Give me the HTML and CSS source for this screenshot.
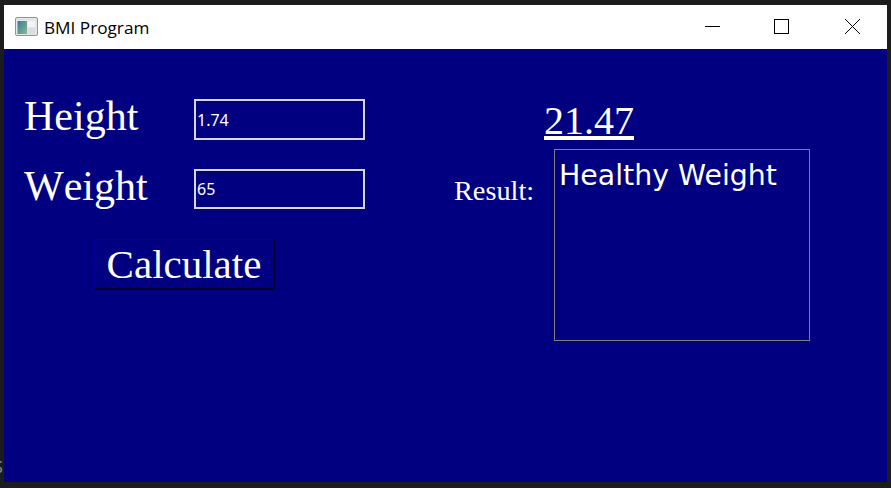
FILE: index.html
```html
<!DOCTYPE html>
<html lang="en">
<head>
  <meta charset="UTF-8">
  <title>BMI Program</title>
  <link rel="stylesheet" href="styles.css">
</head>

<body>
  <span class="behind">S</span>
  <div class="window">
    <div class="titlebar">
      <svg class="app-icon" width="23" height="19" viewBox="0 0 23 19">
        <defs>
          <linearGradient id="pane" x1="0" y1="0" x2="1" y2="1">
            <stop offset="0" stop-color="#3a7a98"/>
            <stop offset="1" stop-color="#86bb8c"/>
          </linearGradient>
        </defs>
        <rect x="0.5" y="0.5" width="22" height="18" rx="1.5" fill="#e4e6e6" stroke="#8f9496"/>
        <rect x="2.5" y="4" width="9.5" height="13" fill="url(#pane)"/>
        <rect x="12.5" y="4" width="7.5" height="6" fill="#f2f3f3"/>
        <rect x="12.5" y="11" width="7.5" height="6" fill="#dadede"/>
      </svg>
      <span class="title">BMI Program</span>
      <div class="controls">
        <div class="control">
          <svg width="15" height="15" viewBox="0 0 15 15"><path d="M0 7.5H15" stroke="#000" fill="none"/></svg>
        </div>
        <div class="control control-max">
          <svg width="15" height="15" viewBox="0 0 15 15"><rect x="0.5" y="0.5" width="14" height="14" stroke="#000" fill="none"/></svg>
        </div>
        <div class="control control-close">
          <svg width="15" height="15" viewBox="0 0 15 15"><path d="M0 0L15 15M15 0L0 15" stroke="#000" fill="none"/></svg>
        </div>
      </div>
    </div>

    <div class="content">
      <div class="form">
        <div class="field">
          <label class="field-label" for="height">Height</label>
          <input class="field-input" id="height" type="text" value="1.74">
        </div>
        <div class="field">
          <label class="field-label" for="weight">Weight</label>
          <input class="field-input" id="weight" type="text" value="65">
        </div>
        <button class="calculate">Calculate</button>
      </div>

      <div class="output">
        <div class="bmi">21.47</div>
        <div class="result">
          <span class="result-label">Result:</span>
          <div class="result-box">Healthy Weight</div>
        </div>
      </div>
    </div>
  </div>
</body>
</html>
```

FILE: styles.css
```css
* { box-sizing: border-box; }
body { margin: 0; padding: 5px 4px 6px; height: 488px; background-color: #1c1c1c; overflow: hidden; }

/* cut-off letter of whatever sits behind the window */
.behind {
  position: absolute;
  left: -6px;
  top: 456px;
  font-family: "Open Sans", sans-serif;
  font-size: 16px;
  color: #8a98a2;
}

.window {
  position: relative;
  height: 477px;
  display: flex;
  flex-direction: column;
}

.titlebar {
  height: 44px;
  background-color: #fff;
  display: flex;
  align-items: center;
  padding-left: 11px;
}

.app-icon { margin-right: 6px; margin-top: -1px; }

.title {
  font-family: "Open Sans", sans-serif;
  font-size: 17.2px;
  color: #000;
}

.controls {
  display: flex;
  margin-left: auto;
  padding-bottom: 1px;
}

.control {
  width: 70px;
  height: 43px;
  display: flex;
  align-items: center;
  justify-content: center;
}

.control-max svg { margin-right: 2px; }
.control-close svg { margin-left: 1px; }

.content {
  flex: 1;
  background-color: #000080;
  display: flex;
  color: #fff;
  font-family: "Liberation Serif", serif;
}

.form {
  width: 361px;
  padding: 50px 0 0 20px;
}

.field {
  display: flex;
  align-items: center;
  height: 40px;
  margin-bottom: 30px;
}

.field-label {
  width: 170px;
  margin-bottom: 6px;
  font-size: 42px;
  line-height: 40px;
  font-kerning: none;
}

.field-input {
  align-self: flex-start;
  width: 171px;
  height: 40px;
  padding: 0 1px;
  border: 2px solid #d8d8d8;
  background-color: #000080;
  color: #fff;
  font-family: "Noto Sans", sans-serif;
  font-size: 16px;
  outline: none;
}

.field:first-child .field-input { height: 41px; }

.calculate {
  display: block;
  width: 181px;
  height: 51px;
  margin-left: 70px;
  padding: 0;
  border-style: solid;
  border-width: 1px 2px 2px 1px;
  border-color: #00009c #000030 #000030 #00009c;
  background-color: #000080;
  color: #fff;
  font-family: inherit;
  font-size: 41px;
}

.output {
  flex: 1;
  padding-top: 50px;
}

.bmi {
  height: 50px;
  margin-left: 179px;
  font-size: 40px;
  line-height: 43px;
  text-decoration: underline;
}

.result {
  display: flex;
  margin-left: 89px;
}

.result-label {
  width: 100px;
  padding-top: 25px;
  font-size: 28.3px;
  line-height: 34px;
}

.result-box {
  width: 256px;
  height: 192px;
  padding: 7px 4px;
  border: 1px solid #808080;
  font-family: "DejaVu Sans", sans-serif;
  font-size: 28.4px;
  line-height: 38px;
}
```
